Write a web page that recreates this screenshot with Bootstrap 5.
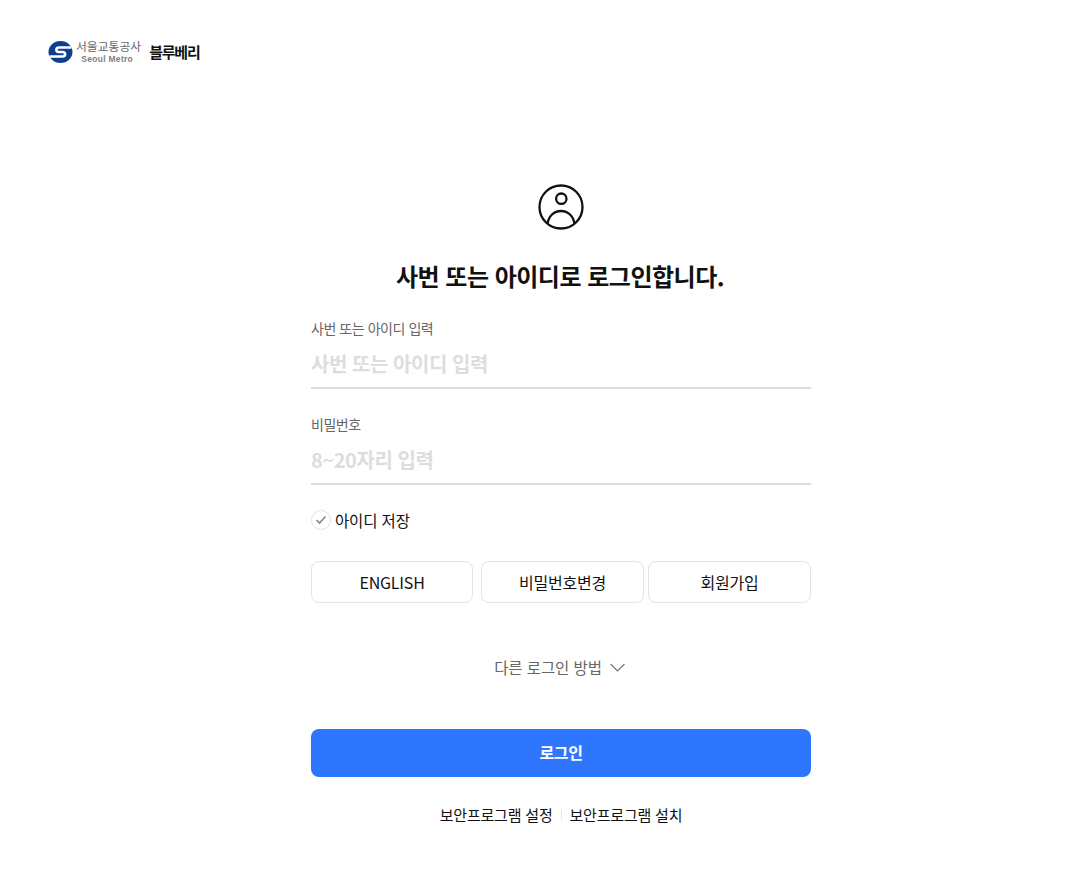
<!DOCTYPE html>
<html lang="ko">
<head>
<meta charset="utf-8">
<title>로그인</title>
<link href="https://cdn.jsdelivr.net/npm/bootstrap@5.3.0/dist/css/bootstrap.min.css" rel="stylesheet">
<style>
html,body{height:100%}
body{font-family:"Noto Sans CJK KR","Noto Sans",sans-serif;color:#111;background:#fff}
.site-head{height:176px;padding:39px 0 0 48px}
.logo-text{height:26px;margin-left:3px}
.logo-word{font-size:11.800px;line-height:13px;color:#666;letter-spacing:0}
.logo-sub{font-family:"Liberation Sans",Arial,sans-serif;font-size:8.500px;line-height:11px;color:#808080;font-weight:700;text-align:right;padding-right:8px;letter-spacing:.3px}
.logo-app{font-size:15px;font-weight:700;letter-spacing:-1.200px;color:#111;margin-left:8px;line-height:24px}
.login-box{width:500px;margin:0 0 0 311px}
.user-ico{display:block;margin:8px auto 0;width:46px;height:46px}
.login-title{font-size:24px;font-weight:700;letter-spacing:-.5px;line-height:32px;margin:30px 0 26px;padding-right:2px;text-align:center}
.fld{height:74px;margin-bottom:22px}
.fld-label{display:block;font-size:14px;line-height:18px;color:#666;letter-spacing:-.45px;padding-top:1px;height:19px}
.fld-input{display:block;width:100%;height:52px;padding:2px 0 0;border:0;border-bottom:2px solid #ddd;font-size:20px;font-weight:700;letter-spacing:-.45px;outline:0;background:transparent}
.fld-input::placeholder{color:#ddd;opacity:1}
.save-row{height:20px;font-size:15.500px;letter-spacing:-.15px;line-height:20px}
.save-chk{width:20px;height:20px;border:1px solid #e2e2e6;border-radius:50%;margin-right:4px}
.act-row{margin-top:31px;gap:4px 8px}
.act-btn{height:42px;border:1px solid #e3e3e8;border-radius:8px;background:#fff;color:#111;font-size:16px;letter-spacing:-.2px;padding:0;line-height:40px}
.act-a{width:162px}.act-b{width:163px;margin-right:-4px}.act-c{width:163px;margin-left:0}
.other-way{margin-top:52px;padding-right:3px;font-size:15.500px;color:#666;letter-spacing:-.1px;line-height:24px}
.login-btn{display:block;width:100%;height:48px;margin-top:50px;padding:0 0 2px;border:0;border-radius:8px;background:#2f76ff;color:#fff;font-size:16px;font-weight:700;letter-spacing:-.45px}
.foot-links{margin-top:26px;font-size:15px;letter-spacing:-.2px;line-height:24px;color:#111}
.foot-sep{width:1px;height:10px;background:#e5e5e5;margin:0 8px}
</style>
</head>
<body>
<header class="site-head d-flex align-items-start">
  <div class="d-flex align-items-center">
    <svg width="25" height="24" viewBox="0 0 25 24" aria-hidden="true">
      <ellipse cx="12.500" cy="12" rx="12" ry="11" fill="#0f3d91"/>
      <path d="M23.500 7.500H11C7.500 7.500 7.500 12 11 12h3.500c3.500 0 3.500 4.500 0 4.500H1.500" fill="none" stroke="#fff" stroke-width="2.600"/>
    </svg>
    <div class="logo-text d-flex flex-column justify-content-between">
      <div class="logo-word">서울교통공사</div>
      <div class="logo-sub">Seoul Metro</div>
    </div>
    <div class="logo-app">블루베리</div>
  </div>
</header>
<main class="login-box">
  <svg class="user-ico" viewBox="0 0 46 46" fill="none" stroke="#111" stroke-width="2.300" aria-hidden="true">
    <circle cx="23" cy="23" r="21.500"/>
    <circle cx="23.300" cy="14.700" r="5.200"/>
    <path d="M9.500 40c1-8 6.500-13 13.500-13s12.500 5 13.500 13"/>
  </svg>
  <h1 class="login-title">사번 또는 아이디로 로그인합니다.</h1>
  <form>
    <div class="fld">
      <label class="fld-label" for="uid">사번 또는 아이디 입력</label>
      <input class="fld-input" id="uid" type="text" placeholder="사번 또는 아이디 입력">
    </div>
    <div class="fld">
      <label class="fld-label" for="pw">비밀번호</label>
      <input class="fld-input" id="pw" type="password" placeholder="8~20자리 입력">
    </div>
    <div class="save-row d-flex align-items-center">
      <span class="save-chk d-inline-flex align-items-center justify-content-center">
        <svg width="12" height="10" viewBox="0 0 12 10" fill="none" stroke="#888" stroke-width="1.700" aria-hidden="true"><path d="M1.500 5l3 3 6-6.500"/></svg>
      </span>
      아이디 저장
    </div>
    <div class="act-row d-flex">
      <button type="button" class="btn act-btn act-a">ENGLISH</button>
      <button type="button" class="btn act-btn act-b">비밀번호변경</button>
      <button type="button" class="btn act-btn act-c">회원가입</button>
    </div>
    <div class="other-way d-flex align-items-center justify-content-center">
      다른 로그인 방법
      <svg class="ms-2" width="15" height="9" viewBox="0 0 15 9" fill="none" stroke="#777" stroke-width="1.200" aria-hidden="true"><path d="M.5 1l7 7 7-7"/></svg>
    </div>
    <button type="button" class="btn login-btn">로그인</button>
  </form>
  <div class="foot-links d-flex align-items-center justify-content-center">
    <span>보안프로그램 설정</span><span class="foot-sep"></span><span>보안프로그램 설치</span>
  </div>
</main>
<script src="https://cdn.jsdelivr.net/npm/bootstrap@5.3.0/dist/js/bootstrap.bundle.min.js"></script>
</body>
</html>
